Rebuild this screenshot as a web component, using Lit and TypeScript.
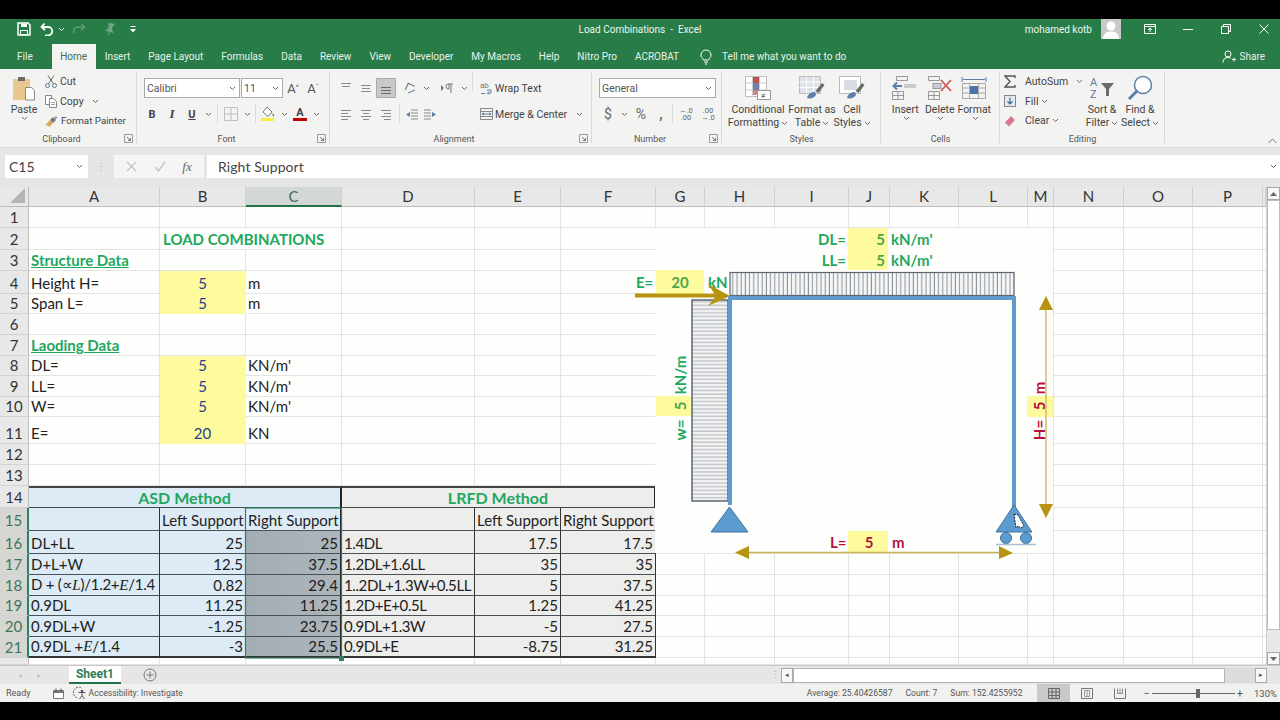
import { LitElement, css, html, svg } from "lit";
import { customElement } from "lit/decorators.js";

const colWidths = [131, 86, 96, 133, 86, 95, 49, 70, 74, 41, 69, 69, 26, 70, 69, 70, 3];
const colNames = "ABCDEFGHIJKLMNOP ".split("");
const rowHeights = [21, 22, 21, 23, 20, 21, 21, 20, 21, 20, 27, 21, 21, 22, 23, 23, 21, 21, 20, 21, 21, 7];

type Cell = { t?: unknown; c?: string; span?: number };

const cells: Record<string, Cell> = {
  B2: { t: "LOAD COMBINATIONS", c: "title", span: 2 },
  A3: { t: "Structure Data", c: "sect" },
  A4: { t: "Height H=" }, B4: { t: "5", c: "inp" }, C4: { t: "m" },
  A5: { t: "Span L=" }, B5: { t: "5", c: "inp" }, C5: { t: "m" },
  A7: { t: "Laoding Data", c: "sect" },
  A8: { t: "DL=" }, B8: { t: "5", c: "inp" }, C8: { t: "KN/m'" },
  A9: { t: "LL=" }, B9: { t: "5", c: "inp" }, C9: { t: "KN/m'" },
  A10: { t: "W=" }, B10: { t: "5", c: "inp" }, C10: { t: "KN/m'" },
  A11: { t: "E=" }, B11: { t: "20", c: "inp" }, C11: { t: "KN" },
  A14: { t: "ASD Method", c: "head asd", span: 3 },
  D14: { t: "LRFD Method", c: "head lrfd", span: 3 },
};

const asd: [unknown, string, string][] = [
  ["DL+LL", "25", "25"],
  ["D+L+W", "12.5", "37.5"],
  [html`<span class="mth">D + (∝<i>L</i>)/1.2+<i>E</i>/1.4</span>`, "0.82", "29.4"],
  ["0.9DL", "11.25", "11.25"],
  ["0.9DL+W", "-1.25", "23.75"],
  [html`0.9DL +<i>E</i>/1.4`, "-3", "25.5"],
];
const lrfd: [string, string, string][] = [
  ["1.4DL", "17.5", "17.5"],
  ["1.2DL+1.6LL", "35", "35"],
  ["1..2DL+1.3W+0.5LL", "5", "37.5"],
  ["1.2D+E+0.5L", "1.25", "41.25"],
  ["0.9DL+1.3W", "-5", "27.5"],
  ["0.9DL+E", "-8.75", "31.25"],
];

cells.A15 = { c: "tb asd" };
cells.B15 = { t: "Left Support", c: "tb asd" };
cells.C15 = { t: "Right Support", c: "tb asd thick" };
cells.D15 = { c: "tb lrfd" };
cells.E15 = { t: "Left Support", c: "tb lrfd" };
cells.F15 = { t: "Right Support", c: "tb lrfd" };
asd.forEach((r, i) => {
  const n = 16 + i;
  cells[`A${n}`] = { t: r[0], c: "tb asd" };
  cells[`B${n}`] = { t: r[1], c: "tb asd num" };
  cells[`C${n}`] = { t: r[2], c: "tb picked num thick" };
});
lrfd.forEach((r, i) => {
  const n = 16 + i;
  cells[`D${n}`] = { t: r[0], c: "tb lrfd tight" };
  cells[`E${n}`] = { t: r[1], c: "tb lrfd num" };
  cells[`F${n}`] = { t: r[2], c: "tb lrfd num" };
});

const chev = html`<svg class="chev" width="7" height="5" viewBox="0 0 7 5"><path d="M1 1l2.500 2.500L6 1" fill="none" stroke="#666" stroke-width="1"/></svg>`;
const launcher = html`<svg class="launch" width="9" height="9" viewBox="0 0 9 9"><path d="M.5 8.500v-8h8v8z" fill="none" stroke="#999"/><path d="M3 3l3.500 3.500M6.500 4v2.500H4" fill="none" stroke="#777"/></svg>`;
const ic = (w: number, h: number, body: unknown) =>
  html`<svg width=${w} height=${h} viewBox="0 0 ${w} ${h}">${body}</svg>`;
const lines = (ys: [number, number, number][], col = "#8a8a8a") =>
  ic(14, 14, ys.map(([y, a, b]) => svg`<path d="M${a} ${y + 0.5}H${b}" stroke=${col} fill="none"/>`));

const icons = {
  save: ic(14, 14, svg`<path d="M1 1h10l2 2v10H1z" fill="none" stroke="#fff" stroke-width="1.500"/><path d="M4 1.500h6v3.500H4z" fill="#fff"/><path d="M3.500 8.500h7V13h-7z" fill="none" stroke="#fff"/>`),
  undo: ic(15, 14, svg`<path d="M4.500 1.500L1.500 5l3.500 3" fill="none" stroke="#fff" stroke-width="1.800"/><path d="M2 5h6a4.200 4.200 0 0 1 0 8.400H5" fill="none" stroke="#fff" stroke-width="1.800"/>`),
  redo: ic(15, 14, svg`<path d="M10.500 2l3 3.200-3.500 3" fill="none" stroke="#5d9a76" stroke-width="1.600"/><path d="M13 5H7a4.200 4.200 0 0 0-4 6" fill="none" stroke="#5d9a76" stroke-width="1.600"/>`),
  touch: ic(14, 14, svg`<path d="M5 1h5v2l-1 1v3l2 2v1H7.500v3.500h-1V10H3V9l2-2V4L4 3z" fill="#6ea585" transform="rotate(15 7 7)"/>`),
  custom: ic(8, 9, svg`<path d="M1.500 1.500h5" stroke="#fff" fill="none"/><path d="M1 4h6L4 7.500z" fill="#fff"/>`),
  avatar: ic(20, 20, svg`<rect width="20" height="20" fill="#c9c9c9"/><circle cx="10" cy="7" r="4.500" fill="#fff"/><path d="M2 20c0-5 3-7.500 8-7.500s8 2.500 8 7.500z" fill="#fff"/>`),
  display: ic(12, 10, svg`<path d="M.5.500h11v9H.500z" fill="none" stroke="#fff"/><path d="M.5 2.500h11" stroke="#fff"/><path d="M6 8V4.500M4 6l2-2 2 2" fill="none" stroke="#fff"/>`),
  min: ic(10, 10, svg`<path d="M0 5.500h10" stroke="#fff" fill="none"/>`),
  restore: ic(10, 10, svg`<path d="M.5 2.500h7v7h-7z" fill="none" stroke="#fff"/><path d="M2.500 2.500V.5h7v7H7.500" fill="none" stroke="#fff"/>`),
  close: ic(10, 10, svg`<path d="M.5.500l9 9M9.500.500l-9 9" fill="none" stroke="#fff"/>`),
  bulb: ic(12, 16, svg`<path d="M3.500 11C2.500 9 1 8.500 1 6a5 5 0 0 1 10 0c0 2.500-1.500 3-2.500 5z" fill="none" stroke="#fff"/><path d="M4 13h4M5 15h2" stroke="#fff" fill="none"/>`),
  share: ic(14, 13, svg`<circle cx="6" cy="4" r="3" fill="none" stroke="#fff"/><path d="M1 12.500c0-3.500 2-5 5-5 1 0 2 .2 3 .8M10 9.500h4M12 7.500v4" fill="none" stroke="#fff"/>`),
  paste: ic(24, 26, svg`<rect x="1" y="3" width="17" height="21" fill="#e8c88e"/><rect x="6" y="1" width="7" height="4" fill="#6b6b6b"/><path d="M13.500 11.500h6l3 3v9.500h-9z" fill="#fff" stroke="#8a8a8a"/>`),
  cut: ic(12, 13, svg`<circle cx="2.500" cy="10.500" r="2" fill="none" stroke="#56749a"/><circle cx="9.500" cy="10.500" r="2" fill="none" stroke="#56749a"/><path d="M3.500 8.800L9 .5M8.500 8.800L3 .5" stroke="#666" fill="none"/>`),
  copy: ic(12, 13, svg`<path d="M.5.500h6v9h-6z" fill="#fff" stroke="#888"/><path d="M4.500 3.500h4l3 3v6h-7z" fill="#fff" stroke="#888"/><path d="M6 7.500h4M6 9.500h4" stroke="#aaa"/>`),
  painter: ic(13, 12, svg`<path d="M5 5l3-3 3 3-3 3z" fill="#777"/><path d="M11 1l1.500 1.500-2 2-1.500-1.500z" fill="#999"/><path d="M5 5l3 3-3 3.500L.5 10z" fill="#d8a858"/>`),
  borders: ic(14, 14, svg`<path d="M.5.500h13v13H.500zM7 .5v13M.5 7h13" fill="none" stroke="#c0c0c0"/>`),
  fill: ic(16, 16, svg`<path d="M7 1l5 5-4 4.500L3 6z" fill="#fff" stroke="#777"/><path d="M13 7c1 1.500 1.500 2.500 1 3.300-.6.600-1.500 0-1.500-1z" fill="#777"/><rect x="1" y="12" width="13" height="3" fill="#f7ee3c"/>`),
  align1: lines([[2, 2, 12], [5, 3, 11]]),
  align2: lines([[4, 2, 12], [7, 3, 11], [10, 2, 12]]),
  align3: lines([[6, 2, 12], [9, 2, 12], [12, 2, 12]], "#6b6b6b"),
  left: lines([[3, 2, 12], [6, 2, 9], [9, 2, 12], [12, 2, 9]]),
  center: lines([[3, 2, 12], [6, 4, 10], [9, 2, 12], [12, 4, 10]]),
  right: lines([[3, 2, 12], [6, 5, 12], [9, 2, 12], [12, 5, 12]]),
  orient: ic(14, 14, svg`<path d="M2 7l5-5 5 5" fill="none" stroke="#777" stroke-width="1.200" transform="rotate(-20 7 7)"/><path d="M5 12l7-3" stroke="#5a7fa8" fill="none"/>`),
  indentL: ic(14, 14, svg`<path d="M6 3h7M6 6h7M6 9h7M6 12h7" stroke="#8a8a8a" fill="none"/><path d="M5 5L1 7.500 5 10z" fill="#5a7fa8"/>`),
  indentR: ic(14, 14, svg`<path d="M1 3h7M1 6h7M1 9h7M1 12h7" stroke="#8a8a8a" fill="none"/><path d="M9 5l4 2.500L9 10z" fill="#5a7fa8"/>`),
  rtl: ic(14, 12, svg`<path d="M1 3l3 3-3 3z" fill="#777"/><path d="M8 2h5M11 2v9M9 2v5a2.500 2.500 0 0 1-1-5" fill="none" stroke="#777"/>`),
  wrap: ic(13, 14, svg`<path d="M1 12.500h4" stroke="#5a7fa8" fill="none"/><path d="M7 9h4v3H7.500M9 10.500L7.500 12 9 13.500" fill="none" stroke="#5a7fa8"/><text x="0" y="7" font-size="8" fill="#777" font-family="Roboto">ab</text>`),
  merge: ic(13, 12, svg`<path d="M.5.500h12v11H.500zM.5 3.500h12M.5 8.500h12" fill="none" stroke="#888"/><path d="M2 6h9M4 4.800L2 6l2 1.200M9 4.800L11 6 9 7.200" fill="none" stroke="#5a7fa8"/>`),
  cond: ic(26, 24, svg`<path d="M.5.500h21v20H.500z" fill="#fff" stroke="#bbb"/><path d="M.5 7h21M.5 14h21M7.500.5v20M14.500.5v20" stroke="#ccc" fill="none"/><path d="M8 1h6v6H8z" fill="#c0504d"/><path d="M8 7h6v7H8z" fill="#6f82a8"/><path d="M8 14h6v5H8z" fill="#c0504d" opacity=".7"/><rect x="12.500" y="14.500" width="13" height="9" fill="#fff" stroke="#999"/><text x="15.500" y="22.500" font-size="9" fill="#555" font-family="Roboto">≠</text>`),
  table: ic(26, 24, svg`<path d="M.5.500h21v17H.500z" fill="#dfe3e8" stroke="#bbb"/><path d="M.5 6h21M.5 11.500h21M7.500.5v17M14.500.5v17" stroke="#fff" fill="none"/><path d="M23 7l2.500 2-6 8-3-2z" fill="#6b6b6b"/><path d="M8 22c1-4 4-6 8-6l1 3c-2 3-5 4-9 3z" fill="#5a7fa8"/>`),
  cellst: ic(26, 24, svg`<path d="M.5.500h21v17H.500z" fill="#fff" stroke="#bbb"/><rect x="5" y="4" width="13" height="10" fill="#d9dde2"/><path d="M8 22c1-4 4-6 8-6l1 3c-2 3-5 4-9 3z" fill="#5a7fa8"/><path d="M23 7l2.500 2-6 8-3-2z" fill="#6b6b6b"/>`),
  insert: ic(26, 24, svg`<path d="M4.500.5h11v4h-11zM.5 15.500h11v8h-11zM6 15.500v8M.5 19.500h11" fill="none" stroke="#999"/><path d="M12 10h12" stroke="#c8ccd0" stroke-width="4"/><path d="M10 10H2M5 6.500L1.500 10 5 13.500" fill="none" stroke="#5a7fa8" stroke-width="2"/>`),
  del: ic(26, 24, svg`<path d="M1.500.5h11v4h-11zM1.500 15.500h11v8h-11zM7 15.500v8M1.500 19.500h11" fill="none" stroke="#999"/><rect x="6" y="7.500" width="8" height="5" fill="#c8ccd0" stroke="#999"/><path d="M14 4l10 11M24 4L14 15" stroke="#d0574f" stroke-width="1.800"/>`),
  format: ic(26, 26, svg`<path d="M1 2v5M25 2v5M2 4.500h22" fill="none" stroke="#5a7fa8"/><path d="M1.500 8.500h23v15h-23zM1.500 13h23M1.500 18h23M8.500 8.500v15M17.500 8.500v15" fill="none" stroke="#aaa"/><rect x="9" y="11" width="8" height="8" fill="#4a73a8"/>`),
  sigma: ic(12, 13, svg`<path d="M11 3V1H1l5 5.500L1 12h10v-2" fill="none" stroke="#555" stroke-width="1.400"/>`),
  filldown: ic(12, 12, svg`<rect x=".5" y=".5" width="11" height="11" fill="#e2e9f2" stroke="#888"/><path d="M6 2.500v6M3.500 6.500L6 9l2.500-2.500" fill="none" stroke="#44678f" stroke-width="1.200"/>`),
  clear: ic(12, 12, svg`<path d="M7 1l4 4-6 6.500-4-4z" fill="#d9788f"/>`),
  sort: ic(26, 24, svg`<text x="1" y="10" font-size="11" fill="#5a7fa8" font-family="Roboto">A</text><text x="1" y="22" font-size="11" fill="#8064a2" font-family="Roboto">Z</text><path d="M12 7h13l-5 6v7h-3v-7z" fill="#6b6b6b"/>`),
  find: ic(26, 26, svg`<circle cx="16" cy="10" r="8.500" fill="#fff" stroke="#5a7fa8" stroke-width="1.500"/><path d="M10 16l-8 8" stroke="#5a7fa8" stroke-width="3"/>`),
  x: ic(11, 11, svg`<path d="M1 1l9 9M10 1l-9 9" stroke="#c4c4c4" stroke-width="1.400" fill="none"/>`),
  check: ic(12, 11, svg`<path d="M1 6l3.500 4L11 1" stroke="#c4c4c4" stroke-width="1.400" fill="none"/>`),
  plus: ic(14, 14, svg`<circle cx="7" cy="7" r="6" fill="none" stroke="#777"/><path d="M7 3.500v7M3.500 7h7" stroke="#777"/>`),
  macro: ic(11, 11, svg`<path d="M.5 2.500h10v8H.500z" fill="#fff" stroke="#777"/><path d="M.5 2.500h10V5H.500z" fill="#777"/><path d="M3 .5v3M8 .5v3" stroke="#555"/>`),
  access: ic(15, 14, svg`<path d="M9 1.500A5.500 5.500 0 1 0 6 12" fill="none" stroke="#666" stroke-dasharray="2 1"/><circle cx="10" cy="5" r="1.300" fill="#555"/><path d="M6.500 6.500h7M10 6.500v3L7.500 13M10 9.500l2.500 3.500" fill="none" stroke="#555"/>`),
  viewNormal: ic(12, 11, svg`<path d="M.5.500h11v10H.500zM4 .5v10M8 .5v10M.5 4h11M.5 7.500h11" fill="none" stroke="#666"/>`),
  viewPage: ic(12, 11, svg`<path d="M.5.500h11v10H.500z" fill="none" stroke="#777"/><path d="M3.500 2.500h5v6h-5zM6 2.500v6" fill="none" stroke="#999"/>`),
  viewBreak: ic(12, 11, svg`<path d="M.5.500v10h11V.5" fill="none" stroke="#777"/><path d="M3.500.5v5h5v-5M6 .5v5" fill="none" stroke="#888"/>`),
};

const tabs = ["Insert", "Page Layout", "Formulas", "Data", "Review", "View", "Developer", "My Macros", "Help", "Nitro Pro", "ACROBAT"];

@customElement("app-root")
export class AppRoot extends LitElement {
  static styles = css`
    :host { display: block; width: 1280px; height: 720px; overflow: hidden; font-family: Roboto, sans-serif; background: #000; }
    .app { display: flex; flex-direction: column; width: 1280px; height: 720px; }
    .black { height: 19px; background: #000; flex: none; }
    .black.b { height: 18px; }

    .titlebar { height: 25px; box-sizing: border-box; padding-bottom: 5px; background: #277c48; color: #eef5f0; display: grid; grid-template-columns: 1fr auto 1fr; align-items: center; font-size: 10px; flex: none; }
    .qat { display: flex; align-items: center; padding-left: 16px; }
    .qat .q { display: flex; justify-content: center; align-items: center; }
    .q1 { width: 15px; } .q2 { width: 20px; margin-left: 6px; } .q3 { width: 8px; } .q4 { width: 18px; margin-left: 4px; } .q5 { width: 14px; margin-left: 16px; } .q6 { width: 8px; margin-left: 12px; }
    .qat .chev path { stroke: #e6f0ea; }
    .winbtns { display: flex; align-items: center; justify-content: flex-end; height: 100%; }
    .user { margin-right: 9px; }
    .avatar { height: 20px; align-self: flex-start; margin-right: 10px; }
    .wb { width: 38px; display: flex; justify-content: center; }
    .wb.last { width: 32px; margin-left: 3px; }

    .tabs { height: 25px; background: #277c48; color: #e8f2ec; display: flex; align-items: center; font-size: 10px; flex: none; }
    .tab { margin-left: 18px; white-space: nowrap; }
    .file { margin-left: 17px; margin-right: 1px; }
    .tab.home { background: #f3f3f2; color: #3e6f52; align-self: flex-end; height: 25px; width: 44px; margin-left: 18px; margin-right: -9px; display: flex; align-items: center; justify-content: center; }
    .tell { display: flex; align-items: center; margin-left: 21px; gap: 10px; }
    .share { margin-left: auto; margin-right: 15px; display: flex; align-items: center; gap: 4px; }

    .ribbon { height: 79px; background: #f3f3f2; display: flex; flex: none; border-bottom: 1px solid #d6d6d6; box-sizing: border-box; color: #444; font-size: 10.500px; position: relative; }
    .grp { box-sizing: border-box; display: flex; flex-direction: column; height: 77px; position: relative; flex: none; }
    .grp::after { content: ""; position: absolute; right: 0; top: 3px; bottom: 3px; width: 1px; background: #d9d9d9; }
    .g-clip { width: 137px; } .g-font { width: 193px; } .g-align { width: 262px; } .g-num { width: 130px; } .g-sty { width: 159px; } .g-cells { width: 119px; } .g-edit { width: 165px; }
    .gb { flex: 1; display: flex; min-height: 0; padding-top: 3px; }
    .gl { height: 15px; display: flex; align-items: center; justify-content: center; font-size: 9px; color: #555; position: relative; }
    .gl.l { padding-right: 14px; }
    .launch { position: absolute; right: 4px; top: 3px; }
    .stack { display: flex; flex-direction: column; }
    .small { display: flex; align-items: center; height: 19.500px; white-space: nowrap; }
    .small svg:first-child { margin-right: 3px; flex: none; }
    .small .chev { margin-left: 8px; }
    .small.fp { font-size: 9.800px; }
    .clip-paste { width: 45px; display: flex; flex-direction: column; align-items: center; padding: 4px 0 0 3px; box-sizing: border-box; flex: none; }
    .clip-paste .lab { margin-top: 1px; line-height: 13px; }
    .twin { display: flex; flex-direction: column; padding-top: 6px; }
    .r { display: flex; align-items: center; height: 20px; }
    .r + .r { margin-top: 6px; }
    .s { display: flex; align-items: center; justify-content: center; flex: none; }
    .w20 { width: 20px; height: 20px; box-sizing: border-box; } .w12 { width: 12px; } .w18 { width: 18px; } .w22 { width: 22px; }
    .sel { background: #c8c8c8; border: 1px solid #aaa; }
    .ml4 { margin-left: 4px; }
    .sep { width: 1px; height: 20px; background: #dcdcdc; margin: 0 3px; flex: none; }
    .sep.n { margin: 0 2px; }
    .pad5 { padding-left: 5px; } .pad6 { padding-left: 6px; } .pad7 { padding-left: 7px; }
    .box { height: 20px; box-sizing: border-box; border: 1px solid #ababab; background: #fff; display: flex; align-items: center; justify-content: space-between; padding: 0 3px 0 2px; font-size: 10.500px; color: #555; flex: none; }
    .fb { width: 96px; margin-right: 1px; } .sb { width: 42px; } .nb { width: 117px; }
    .bold { font-weight: 700; font-size: 11px; color: #444; } .it { font-style: italic; font-family: "Liberation Serif", serif; font-weight: 700; font-size: 13px; } .un { text-decoration: underline; font-weight: 700; font-size: 11px; }
    .aa { font-size: 13px; color: #555; }
    .sup { font-size: 7px; vertical-align: super; line-height: 0; }
    .fc { display: flex; flex-direction: column; align-items: center; font-weight: 700; font-size: 11px; line-height: 11px; color: #444; }
    .fc::after { content: ""; width: 14px; height: 3px; background: #c00000; }
    .dollar { font-size: 14px; color: #666; } .pct { font-size: 14px; color: #666; } .cm { font-size: 14px; font-weight: 700; color: #666; line-height: 8px; }
    .inc { font-size: 7.500px; line-height: 7px; color: #666; text-align: center; }
    .alcol { width: 133px; flex: none; } .alr { display: flex; align-items: center; gap: 2px; white-space: nowrap; }
    .alr.wr, .alr.mg { margin-left: 4px; }
    .alr .chev { margin-left: 7px; }
    .big { display: flex; flex-direction: column; align-items: center; flex: none; text-align: center; white-space: nowrap; line-height: 13px; }
    .big .ico { height: 31px; display: flex; align-items: center; justify-content: center; }
    .big .chev { margin-left: 2px; vertical-align: middle; }
    .b64 { width: 64px; } .b44 { width: 44px; } .b36 { width: 36px; } .b35 { width: 34.500px; } .b38 { width: 38px; }
    .pl4 { padding-left: 4px; } .plc { padding-left: 7px; }
    .edit-list { width: 83px; padding-left: 4px; box-sizing: border-box; flex: none; }
    .edit-list .small svg:first-child { width: 12px; margin-right: 9px; }
    .edit-list .small + .small .chev { margin-left: 3px; }
    .caret { position: absolute; right: 3px; top: 69px; }

    .formula { height: 39px; background: #e6e6e6; display: flex; align-items: center; padding: 0 0 2px 5px; box-sizing: border-box; flex: none; }
    .name { width: 83px; height: 23px; background: #fff; display: flex; align-items: center; justify-content: space-between; padding: 0 5px 0 4px; box-sizing: border-box; font: 14px Lato, sans-serif; color: #444; }
    .dots { width: 26px; display: flex; justify-content: center; color: #aaa; font-size: 10px; line-height: 4px; }
    .fx { width: 90px; height: 23px; background: #f5f5f5; display: flex; align-items: center; justify-content: space-around; padding: 0 4px; box-sizing: border-box; margin-right: 3px; }
    .fxt { font: italic 13px "Liberation Serif", serif; color: #666; }
    .finput { flex: 1; height: 23px; background: #fff; display: flex; align-items: center; justify-content: space-between; padding: 0 3px 0 11px; font: 14px Lato, sans-serif; color: #444; letter-spacing: 0.1px; }

    .main { height: 478px; display: flex; flex: none; background: #fefefc; }
    .sheet { position: relative; width: 1266px; height: 478px; display: grid; grid-template-columns: var(--cols); grid-template-rows: var(--rows); font: 15px/19px Lato, sans-serif; color: #222; overflow: hidden; }
    .hd { background: #e8e8e8; border-right: 1px solid #cfcfcf; border-bottom: 1px solid #bdbdbd; box-sizing: border-box; display: flex; align-items: center; justify-content: center; color: #333; }
    .hd.on { background: #d3d8d4; border-bottom: 2px solid #217346; color: #3d6f55; }
    .rh { background: #e8e8e8; border-right: 1px solid #bdbdbd; border-bottom: 1px solid #d2d2d2; box-sizing: border-box; display: flex; align-items: flex-end; justify-content: center; color: #333; overflow: hidden; }
    .rh.on { background: #d6d7d2; color: #40755a; border-right: 2px solid #2f7f63; }
    .corner { background: #e8e8e8; border-right: 1px solid #bdbdbd; border-bottom: 1px solid #bdbdbd; box-sizing: border-box; display: flex; align-items: flex-end; justify-content: flex-end; padding: 0 3px 3px 0; }
    .c { border-right: 1px solid #e4e4e2; border-bottom: 1px solid #e4e4e2; box-sizing: border-box; display: flex; align-items: flex-end; padding: 0 2px; white-space: nowrap; min-width: 0; }
    .c i { font-family: "Liberation Serif", serif; font-size: 15px; }
    .mth { letter-spacing: -0.25px; }
    .tight { letter-spacing: -0.4px; }
    .title { color: #22a75f; font-weight: 700; padding-left: 3px; }
    .sect { color: #22a75f; font-weight: 700; text-decoration: underline; }
    .inp { background: #fdfb9e; justify-content: center; color: #27408b; border-color: #fdfb9e; }
    .head { justify-content: center; align-items: center; color: #22a75f; font-weight: 700; font-size: 16px; border-top: 2px solid #444; border-bottom: 1px solid #444; border-right: 2px solid #222; }
    .asd { background: #dcebf5; } .lrfd { background: #ededeb; }
    .tb { border-right: 1px solid #333; border-bottom: 1px solid #4a5258; }
    .num { justify-content: flex-end; }
    .picked { background: linear-gradient(90deg, #a3adb4, #adb5bb); color: #1c1c1c; }
    .thick { border-right: 2px solid #222; }
    .end { border-bottom: 2px solid #333; }

    .draw { position: absolute; left: 0; top: 0; pointer-events: none; }
    .draw text { font-family: Lato, sans-serif; font-size: 15px; }
    .gt { fill: #22a75f; font-weight: 700; } .gr { fill: #4aa84a; font-weight: 700; } .rd { fill: #b5103c; font-weight: 700; }

    .vscroll { width: 14px; display: flex; flex-direction: column; background: #e8e8e8; border-left: 1px solid #cfcfcf; box-sizing: border-box; }
    .vb { height: 13px; background: #f7f7f7; border: 1px solid #a8a8a8; box-sizing: border-box; display: flex; align-items: center; justify-content: center; }
    .vt { height: 430px; background: #fff; border: 1px solid #bcbcbc; box-sizing: border-box; }
    .vg { flex: 1; }

    .tabbar { height: 19px; background: #e6e6e6; border-top: 1px solid #c8c8c8; box-sizing: border-box; display: flex; align-items: center; flex: none; }
    .nav { width: 69px; display: flex; gap: 15px; padding-left: 18px; box-sizing: border-box; color: #c6c6c6; font-size: 8px; }
    .sheettab { width: 52px; height: 18px; margin-top: -1px; background: #fff; border-bottom: 2px solid #217346; box-sizing: border-box; text-align: center; font: 700 12px/16px Roboto, sans-serif; color: #2f7d52; }
    .addtab { margin-left: 22px; display: flex; }
    .splitter { margin-left: 613px; color: #aaa; font-size: 9px; line-height: 4px; width: 11px; text-align: center; }
    .hsb { display: flex; height: 15px; align-items: stretch; }
    .hb { width: 12px; background: #f7f7f7; border: 1px solid #a8a8a8; box-sizing: border-box; display: flex; align-items: center; justify-content: center; font-size: 7px; color: #555; }
    .ht { width: 432px; background: #fff; border: 1px solid #b5b5b5; box-sizing: border-box; }
    .hg { width: 30px; background: #dcdcdc; }

    .status { height: 18px; background: #f1f1f0; display: flex; align-items: center; font-size: 9px; color: #555; flex: none; white-space: nowrap; }
    .st1 { margin-left: 6px; } .st2 { margin-left: 22px; display: flex; } .st3 { margin-left: 8px; display: flex; align-items: center; gap: 2px; font-size: 8.600px; }
    .st4 { margin-left: auto; display: flex; gap: 13px; margin-right: 15px; font-size: 8.600px; }
    .vw { width: 33px; height: 18px; display: flex; align-items: center; justify-content: center; }
    .vw.on { background: #c9c9c9; }
    .zoomer { display: flex; align-items: center; margin-left: 7px; gap: 2px; font-size: 11px; }
    .slider { width: 83px; height: 1px; background: #666; position: relative; }
    .thumb { position: absolute; left: 44px; top: -4px; width: 4px; height: 9px; background: #666; }
    .pc { margin-left: 11px; margin-right: 3px; font-size: 9.500px; }
  `;

  private renderGrid() {
    const out: unknown[] = [html`<div class="corner"><svg width="15" height="15" viewBox="0 0 15 15"><path d="M15 0v15H0z" fill="#b5b5b5"/></svg></div>`];
    colNames.forEach((n, i) => out.push(html`<div class="hd ${i === 2 ? "on" : ""}">${n}</div>`));
    rowHeights.forEach((_, ri) => {
      const r = ri + 1;
      out.push(html`<div class="rh ${r >= 15 && r <= 21 ? "on" : ""}">${r < 22 ? r : ""}</div>`);
      let skip = 0;
      colNames.forEach((n) => {
        if (skip > 0) { skip--; return; }
        const cell = cells[`${n}${r}`];
        if (cell?.span) skip = cell.span - 1;
        const cls = `c ${cell?.c ?? ""} ${r === 21 && cell?.c?.includes("tb") ? "end" : ""}`;
        out.push(html`<div class=${cls} style=${cell?.span ? `grid-column: span ${cell.span}` : ""}>${cell?.t ?? ""}</div>`);
      });
    });
    return out;
  }

  private rotated(x: number, y: number, t: string, cls: string) {
    return svg`<text x=${x} y=${y} class=${cls} text-anchor="middle" transform="rotate(-90 ${x} ${y})">${t}</text>`;
  }

  private renderDrawing() {
    const gold = "#b8930f";
    return html`<svg class="draw" width="1266" height="478" viewBox="0 187 1266 478">
      <defs>
        <pattern id="vh" width="4.200" height="10" patternUnits="userSpaceOnUse"><rect width="4.200" height="10" fill="#f6f6f6"/><path d="M2 0v10" stroke="#8a9198" stroke-width="1"/></pattern>
        <pattern id="hh" width="10" height="3.700" patternUnits="userSpaceOnUse"><rect width="10" height="3.700" fill="#f4f4f4"/><path d="M0 2h10" stroke="#b5bac0" stroke-width="1.200"/></pattern>
      </defs>
      <rect x="655" y="228" width="398" height="325" fill="#fefefc"/>
      <rect x="848" y="228" width="40" height="42" fill="#fdfb9e"/>
      <rect x="656" y="270" width="48" height="24" fill="#fdfb9e"/>
      <rect x="656" y="396" width="36" height="20" fill="#fdfb9e"/>
      <rect x="1027" y="396" width="26" height="21" fill="#fdfb9e"/>
      <rect x="848" y="531" width="40" height="22" fill="#fdfb9e"/>

      <text x="846" y="245" class="gt" text-anchor="end">DL=</text>
      <text x="846" y="266" class="gt" text-anchor="end">LL=</text>
      <text x="885" y="245" class="gr" text-anchor="end">5</text>
      <text x="885" y="266" class="gr" text-anchor="end">5</text>
      <text x="891" y="245" class="gt">kN/m'</text>
      <text x="891" y="266" class="gt">kN/m'</text>
      <text x="636" y="288" class="gt">E=</text>
      <text x="680" y="288" class="gr" text-anchor="middle">20</text>
      <text x="708" y="288" class="gt">kN</text>

      <rect x="730" y="272.500" width="284" height="23" fill="url(#vh)" stroke="#5c6670" stroke-width="1.200"/>
      <rect x="692" y="300" width="36" height="201" fill="url(#hh)" stroke="#5c6670" stroke-width="1.500"/>
      <path d="M635 295.500H716" stroke=${gold} stroke-width="4" fill="none"/>
      <path d="M730 296L708 284L716 296L708 306z" fill=${gold}/>

      <path d="M730 505V298H1014V508" fill="none" stroke="#5f9bcf" stroke-width="4"/>
      <path d="M729.500 507L748 532H711z" fill="#5b9bd0" stroke="#41719c"/>
      <path d="M1014 505L1032 532H996z" fill="#5b9bd0" stroke="#41719c"/>
      <circle cx="1006" cy="538" r="5.500" fill="#5b9bd0" stroke="#41719c"/>
      <circle cx="1026" cy="538" r="5.500" fill="#5b9bd0" stroke="#41719c"/>
      <path d="M996 544.500H1036" stroke="#a9c0d4" stroke-width="1.500"/>
      <path d="M1014 514l4 1 6 11-3 2-3-2-2 2z" fill="#fff" stroke="#222" stroke-dasharray="2 1"/>

      <path d="M1046 308V506" stroke="#c8b25a" stroke-width="1.300"/>
      <path d="M1046 296L1053 310H1039z" fill=${gold}/>
      <path d="M1046 518L1053 504H1039z" fill=${gold}/>
      <path d="M748 552.500H1000" stroke="#c8b25a" stroke-width="1.300"/>
      <path d="M735 552.500L749 546V559z" fill=${gold}/>
      <path d="M1013 553L999 546V559z" fill=${gold}/>

      ${this.rotated(686, 430, "w=", "gt")}
      ${this.rotated(686, 406, "5", "gr")}
      ${this.rotated(686, 375, "kN/m", "gt")}
      ${this.rotated(1045, 430, "H=", "rd")}
      ${this.rotated(1045, 406, "5", "rd")}
      ${this.rotated(1045, 388, "m", "rd")}
      <text x="830" y="548" class="rd">L=</text>
      <text x="869" y="548" class="rd" text-anchor="middle">5</text>
      <text x="892" y="548" class="rd">m</text>

      <rect x="245.500" y="508" width="96" height="150" fill="none" stroke="#2f7f63" stroke-width="1.200"/>
      <rect x="339" y="656" width="5" height="5" fill="#2f7f63"/>
    </svg>`;
  }

  render() {
    const cols = `29px ${colWidths.map((w) => w + "px").join(" ")}`;
    const rows = `20px ${rowHeights.map((h) => h + "px").join(" ")}`;
    return html`<div class="app">
      <div class="black"></div>
      <div class="titlebar">
        <div class="qat">
          <span class="q q1">${icons.save}</span>
          <span class="q q2">${icons.undo}</span>
          <span class="q q3">${chev}</span>
          <span class="q q4">${icons.redo}</span>
          <span class="q q5">${icons.touch}</span>
          <span class="q q6">${icons.custom}</span>
        </div>
        <div>Load Combinations &nbsp;-&nbsp; Excel</div>
        <div class="winbtns">
          <span class="user">mohamed kotb</span>
          <span class="avatar">${icons.avatar}</span>
          <span class="wb">${icons.display}</span>
          <span class="wb">${icons.min}</span>
          <span class="wb">${icons.restore}</span>
          <span class="wb last">${icons.close}</span>
        </div>
      </div>

      <div class="tabs">
        <span class="tab file">File</span>
        <span class="tab home">Home</span>
        ${tabs.map((t) => html`<span class="tab">${t}</span>`)}
        <span class="tell">${icons.bulb}<span>Tell me what you want to do</span></span>
        <span class="share">${icons.share}Share</span>
      </div>

      <div class="ribbon">
        <div class="grp g-clip">
          <div class="gb">
            <div class="clip-paste">${icons.paste}<span class="lab">Paste</span>${chev}</div>
            <div class="stack">
              <div class="small">${icons.cut}Cut</div>
              <div class="small">${icons.copy}Copy${chev}</div>
              <div class="small fp">${icons.painter}Format Painter</div>
            </div>
          </div>
          <div class="gl l">Clipboard${launcher}</div>
        </div>

        <div class="grp g-font">
          <div class="gb"><div class="twin">
            <div class="r pad7">
              <div class="box fb">Calibri${chev}</div>
              <div class="box sb">11${chev}</div>
              <span class="s w20 aa">A<span class="sup">^</span></span>
              <span class="s w20 aa">A<span class="sup">ˇ</span></span>
            </div>
            <div class="r pad5">
              <span class="s w20 bold">B</span><span class="s w20 it">I</span><span class="s w20 un">U</span><span class="s w12">${chev}</span>
              <span class="sep"></span>
              <span class="s w20">${icons.borders}</span><span class="s w12">${chev}</span>
              <span class="sep n"></span>
              <span class="s w20">${icons.fill}</span><span class="s w12">${chev}</span>
              <span class="s w20 fc">A</span><span class="s w12">${chev}</span>
            </div>
          </div></div>
          <div class="gl l">Font${launcher}</div>
        </div>

        <div class="grp g-align">
          <div class="gb pad6">
            <div class="twin alcol">
              <div class="r">
                <span class="s w20">${icons.align1}</span><span class="s w20">${icons.align2}</span><span class="s w20 sel">${icons.align3}</span>
                <span class="s w20 ml4">${icons.orient}</span><span class="s w12">${chev}</span>
                <span class="s w22 ml4">${icons.rtl}</span><span class="s w12">${chev}</span>
              </div>
              <div class="r">
                <span class="s w20">${icons.left}</span><span class="s w20">${icons.center}</span><span class="s w20">${icons.right}</span>
                <span class="sep"></span>
                <span class="s w18">${icons.indentL}</span><span class="s w18">${icons.indentR}</span>
              </div>
            </div>
            <span class="sep"></span>
            <div class="twin">
              <div class="r alr wr">${icons.wrap}Wrap Text</div>
              <div class="r alr mg">${icons.merge}Merge &amp; Center${chev}</div>
            </div>
          </div>
          <div class="gl l">Alignment${launcher}</div>
        </div>

        <div class="grp g-num">
          <div class="gb"><div class="twin">
            <div class="r pad7"><div class="box nb">General${chev}</div></div>
            <div class="r pad6">
              <span class="s w20 dollar">$</span><span class="s w12">${chev}</span>
              <span class="s w22 pct">%</span><span class="s w18 cm">,</span>
              <span class="sep n"></span>
              <span class="s w22 inc">←.0<br />.00</span><span class="s w22 inc">.00<br />→.0</span>
            </div>
          </div></div>
          <div class="gl l">Number${launcher}</div>
        </div>

        <div class="grp g-sty">
          <div class="gb pl4">
            <div class="big b64"><div class="ico">${icons.cond}</div>Conditional<br /><span>Formatting${chev}</span></div>
            <div class="big b44"><div class="ico">${icons.table}</div>Format as<br /><span>Table${chev}</span></div>
            <div class="big b36"><div class="ico">${icons.cellst}</div>Cell<br /><span>Styles${chev}</span></div>
          </div>
          <div class="gl">Styles</div>
        </div>

        <div class="grp g-cells">
          <div class="gb plc">
            <div class="big b35"><div class="ico">${icons.insert}</div>Insert<br />${chev}</div>
            <div class="big b35"><div class="ico">${icons.del}</div>Delete<br />${chev}</div>
            <div class="big b35"><div class="ico">${icons.format}</div>Format<br />${chev}</div>
          </div>
          <div class="gl">Cells</div>
        </div>

        <div class="grp g-edit">
          <div class="gb">
            <div class="stack edit-list">
              <div class="small">${icons.sigma}AutoSum${chev}</div>
              <div class="small">${icons.filldown}Fill${chev}</div>
              <div class="small">${icons.clear}Clear${chev}</div>
            </div>
            <div class="big b38"><div class="ico">${icons.sort}</div>Sort &amp;<br /><span>Filter${chev}</span></div>
            <div class="big b38"><div class="ico">${icons.find}</div>Find &amp;<br /><span>Select${chev}</span></div>
          </div>
          <div class="gl">Editing</div>
        </div>
        <svg class="caret" width="9" height="6" viewBox="0 0 9 6"><path d="M.5 5l4-4 4 4" fill="none" stroke="#777"/></svg>
      </div>

      <div class="formula">
        <div class="name">C15${chev}</div>
        <div class="dots">⋮</div>
        <div class="fx">${icons.x}${icons.check}<span class="fxt">fx</span></div>
        <div class="finput">Right Support${chev}</div>
      </div>

      <div class="main">
        <div class="sheet" style="--cols: ${cols}; --rows: ${rows}">
          ${this.renderGrid()}
          ${this.renderDrawing()}
        </div>
        <div class="vscroll">
          <div class="vb"><svg width="7" height="4" viewBox="0 0 7 4"><path d="M0 4l3.500-4L7 4z" fill="#666"/></svg></div>
          <div class="vt"></div>
          <div class="vg"></div>
          <div class="vb"><svg width="7" height="4" viewBox="0 0 7 4"><path d="M0 0l3.500 4L7 0z" fill="#666"/></svg></div>
        </div>
      </div>

      <div class="tabbar">
        <div class="nav"><span>◂</span><span>▸</span></div>
        <div class="sheettab">Sheet1</div>
        <div class="addtab">${icons.plus}</div>
        <div class="splitter">⋮</div>
        <div class="hsb">
          <div class="hb">◂</div>
          <div class="ht"></div>
          <div class="hg"></div>
          <div class="hb">▸</div>
        </div>
      </div>

      <div class="status">
        <span class="st1">Ready</span>
        <span class="st2">${icons.macro}</span>
        <span class="st3">${icons.access}Accessibility: Investigate</span>
        <span class="st4"><span>Average: 25.40426587</span><span>Count: 7</span><span>Sum: 152.4255952</span></span>
        <span class="vw on">${icons.viewNormal}</span>
        <span class="vw">${icons.viewPage}</span>
        <span class="vw">${icons.viewBreak}</span>
        <span class="zoomer">−<span class="slider"><span class="thumb"></span></span>+</span>
        <span class="pc">130%</span>
      </div>
      <div class="black b"></div>
    </div>`;
  }
}
